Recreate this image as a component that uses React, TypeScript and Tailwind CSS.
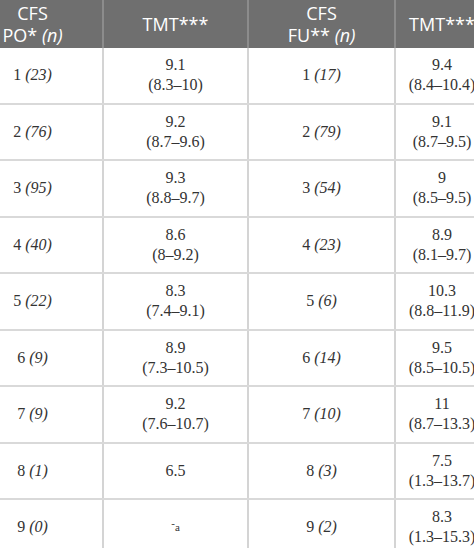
const rows: [string, string, string, string | null, string, string, string, string | null][] = [
  ['1', '23', '9.1', '(8.3–10)', '1', '17', '9.4', '(8.4–10.4)'],
  ['2', '76', '9.2', '(8.7–9.6)', '2', '79', '9.1', '(8.7–9.5)'],
  ['3', '95', '9.3', '(8.8–9.7)', '3', '54', '9', '(8.5–9.5)'],
  ['4', '40', '8.6', '(8–9.2)', '4', '23', '8.9', '(8.1–9.7)'],
  ['5', '22', '8.3', '(7.4–9.1)', '5', '6', '10.3', '(8.8–11.9)'],
  ['6', '9', '8.9', '(7.3–10.5)', '6', '14', '9.5', '(8.5–10.5)'],
  ['7', '9', '9.2', '(7.6–10.7)', '7', '10', '11', '(8.7–13.3)'],
  ['8', '1', '6.5', null, '8', '3', '7.5', '(1.3–13.7)'],
  ['9', '0', '', null, '9', '2', '8.3', '(1.3–15.3)'],
];

function Count({ k, n }: { k: string; n: string }) {
  return (
    <span>
      {k} <span className="italic">({n})</span>
    </span>
  );
}

function Value({ v, range }: { v: string; range: string | null }) {
  if (!v) {
    return (
      <span className="text-[11px] leading-none">
        <span className="relative -top-[4px]">-</span>a
      </span>
    );
  }
  return (
    <div className="flex flex-col items-center leading-[20px]">
      <span>{v}</span>
      {range && <span>{range}</span>}
    </div>
  );
}

export default function App() {
  return (
    <div className="w-[474px] h-[548px] overflow-hidden bg-white">
      <div className="ml-[-37px] w-[530px]">
        <div className="flex h-[48px] bg-[#6f6f6f] text-white text-[18px] leading-[22px] font-['Open_Sans','Noto_Sans',sans-serif]">
          <div className="w-[141px] flex flex-col items-center justify-center border-r-2 border-[#8c8c8c]">
            <span>CFS</span>
            <span>
              PO* <span className="italic">(n)</span>
            </span>
          </div>
          <div className="w-[145px] flex items-center justify-center border-r-2 border-[#8c8c8c]">TMT***</div>
          <div className="w-[147px] flex flex-col items-center justify-center border-r-2 border-[#8c8c8c]">
            <span>CFS</span>
            <span>
              FU** <span className="italic">(n)</span>
            </span>
          </div>
          <div className="w-[92px] flex items-center justify-center">TMT***</div>
        </div>
        <div className="text-[16px] text-[#333333] font-['Liberation_Serif','Times_New_Roman','DejaVu_Serif',serif]">
          {rows.map((r, i) => (
            <div key={i} className="flex h-[56.5px] border-b-2 border-[#d9d9d9]">
              <div className="w-[141px] flex items-center justify-center border-r-2 border-[#d4d4d4]">
                <Count k={r[0]} n={r[1]} />
              </div>
              <div className="w-[145px] flex items-center justify-center border-r-2 border-[#d4d4d4]">
                <Value v={r[2]} range={r[3]} />
              </div>
              <div className="w-[147px] flex items-center justify-center border-r-2 border-[#d4d4d4]">
                <Count k={r[4]} n={r[5]} />
              </div>
              <div className="w-[92px] flex items-center justify-center">
                <Value v={r[6]} range={r[7]} />
              </div>
            </div>
          ))}
        </div>
      </div>
    </div>
  );
}
